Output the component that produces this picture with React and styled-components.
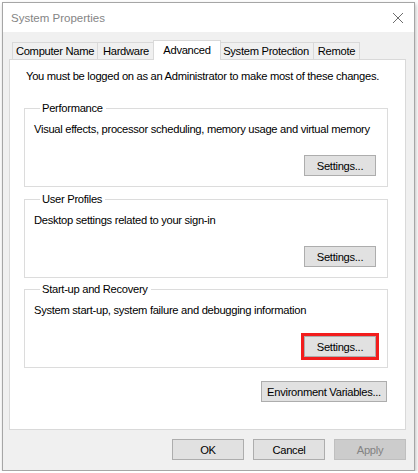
import React from 'react';
import styled, { createGlobalStyle } from 'styled-components';

const Global = createGlobalStyle`
  html, body {
    margin: 0;
    padding: 0;
    background: #ffffff;
  }
  body {
    font-family: "Liberation Sans", Arial, sans-serif;
    font-size: 11.2px;
    letter-spacing: -0.3px;
    color: #000;
  }
`;

const Window = styled.div`
  margin: 2px 0 0 2px;
  width: 411px;
  height: 467px;
  border: 1px solid #a6a6a6;
  box-shadow: 1px 2px 4px rgba(0, 0, 0, 0.25);
  background: #f0f0f0;
  display: flex;
  flex-direction: column;
`;

const TitleBar = styled.div`
  height: 29px;
  background: #ffffff;
  display: flex;
  align-items: center;
  justify-content: space-between;
  padding: 0 10px 0 8px;
`;

const Title = styled.span`
  font-size: 11.5px;
  letter-spacing: 0;
  color: #858585;
`;

const Body = styled.div`
  flex: 1;
  display: flex;
  flex-direction: column;
  padding: 8px 8px 0 6px;
`;

const TabStrip = styled.div`
  display: flex;
  align-items: flex-end;
  padding-left: 3px;
  height: 20px;
`;

const Tab = styled.div`
  width: ${({ w }) => w}px;
  height: ${({ active }) => (active ? '20px' : '18px')};
  box-sizing: border-box;
  margin: 0 ${({ active }) => (active ? '-2px' : '0')};
  border: 1px solid #d9d9d9;
  border-bottom: ${({ active }) => (active ? 'none' : '1px solid #d9d9d9')};
  border-left: ${({ first, active }) => (first || active ? '1px solid #d9d9d9' : 'none')};
  background: ${({ active }) => (active ? '#ffffff' : '#f0f0f0')};
  position: relative;
  z-index: ${({ active }) => (active ? 1 : 0)};
  display: flex;
  align-items: center;
  justify-content: center;
  padding-bottom: ${({ active }) => (active ? '2px' : '0')};
  white-space: nowrap;
`;

const Panel = styled.div`
  height: 371px;
  box-sizing: border-box;
  background: #ffffff;
  border: 1px solid #d9d9d9;
  margin-top: -1px;
  padding: 10px 17px 0 14px;
  display: flex;
  flex-direction: column;
`;

const Notice = styled.p`
  margin: 0 0 20px 2px;
`;

const Group = styled.fieldset`
  margin: 0 0 ${({ gap }) => gap}px 0;
  padding: 9px 11px 10px 9px;
  border: 1px solid #dcdcdc;
  min-width: 0;
`;

const Legend = styled.legend`
  padding: 0 3px 0 2px;
  margin-left: 6px;
`;

const Desc = styled.div`
  margin-bottom: 20px;
  white-space: nowrap;
`;

const ButtonRow = styled.div`
  display: flex;
  justify-content: flex-end;
  gap: 9px;
`;

const Button = styled.button`
  width: ${({ w }) => w || 72}px;
  height: 21px;
  box-sizing: border-box;
  border: 1px solid ${({ disabled }) => (disabled ? '#bfbfbf' : '#adadad')};
  background: ${({ disabled }) => (disabled ? '#cccccc' : '#e1e1e1')};
  color: ${({ disabled }) => (disabled ? '#838383' : '#000')};
  font-family: "Liberation Sans", Arial, sans-serif;
  font-size: 11.2px;
  letter-spacing: -0.3px;
  padding: 0;
  border-radius: 0;
  outline: ${({ highlight }) => (highlight ? '3px solid #f21d1d' : 'none')};
  outline-offset: 0;
`;

const EnvRow = styled(ButtonRow)`
  margin-top: 13px;
  padding-right: 1px;
`;

const Footer = styled(ButtonRow)`
  margin-top: 9px;
`;

const CloseIcon = () => (
  <svg width="12" height="12" viewBox="0 0 12 12">
    <path d="M1 1 L11 11 M11 1 L1 11" stroke="#6d6d6d" strokeWidth="1" fill="none" />
  </svg>
);

const tabs = [
  { label: 'Computer Name', w: 86 },
  { label: 'Hardware', w: 57 },
  { label: 'Advanced', w: 68 },
  { label: 'System Protection', w: 95 },
  { label: 'Remote', w: 46 },
];

const groups = [
  { title: 'Performance', desc: 'Visual effects, processor scheduling, memory usage and virtual memory', gap: 6 },
  { title: 'User Profiles', desc: 'Desktop settings related to your sign-in', gap: 5 },
  { title: 'Start-up and Recovery', desc: 'System start-up, system failure and debugging information', gap: 0, highlight: true },
];

export default function App() {
  return (
    <>
      <Global />
      <Window>
        <TitleBar>
          <Title>System Properties</Title>
          <CloseIcon />
        </TitleBar>
        <Body>
          <TabStrip>
            {tabs.map((t, i) => (
              <Tab key={t.label} w={t.w} first={i === 0} active={t.label === 'Advanced'}>{t.label}</Tab>
            ))}
          </TabStrip>
          <Panel>
            <Notice>You must be logged on as an Administrator to make most of these changes.</Notice>
            {groups.map(g => (
              <Group key={g.title} gap={g.gap}>
                <Legend>{g.title}</Legend>
                <Desc>{g.desc}</Desc>
                <ButtonRow>
                  <Button highlight={g.highlight}>Settings...</Button>
                </ButtonRow>
              </Group>
            ))}
            <EnvRow>
              <Button w={126}>Environment Variables...</Button>
            </EnvRow>
          </Panel>
          <Footer>
            <Button>OK</Button>
            <Button>Cancel</Button>
            <Button disabled>Apply</Button>
          </Footer>
        </Body>
      </Window>
    </>
  );
}
